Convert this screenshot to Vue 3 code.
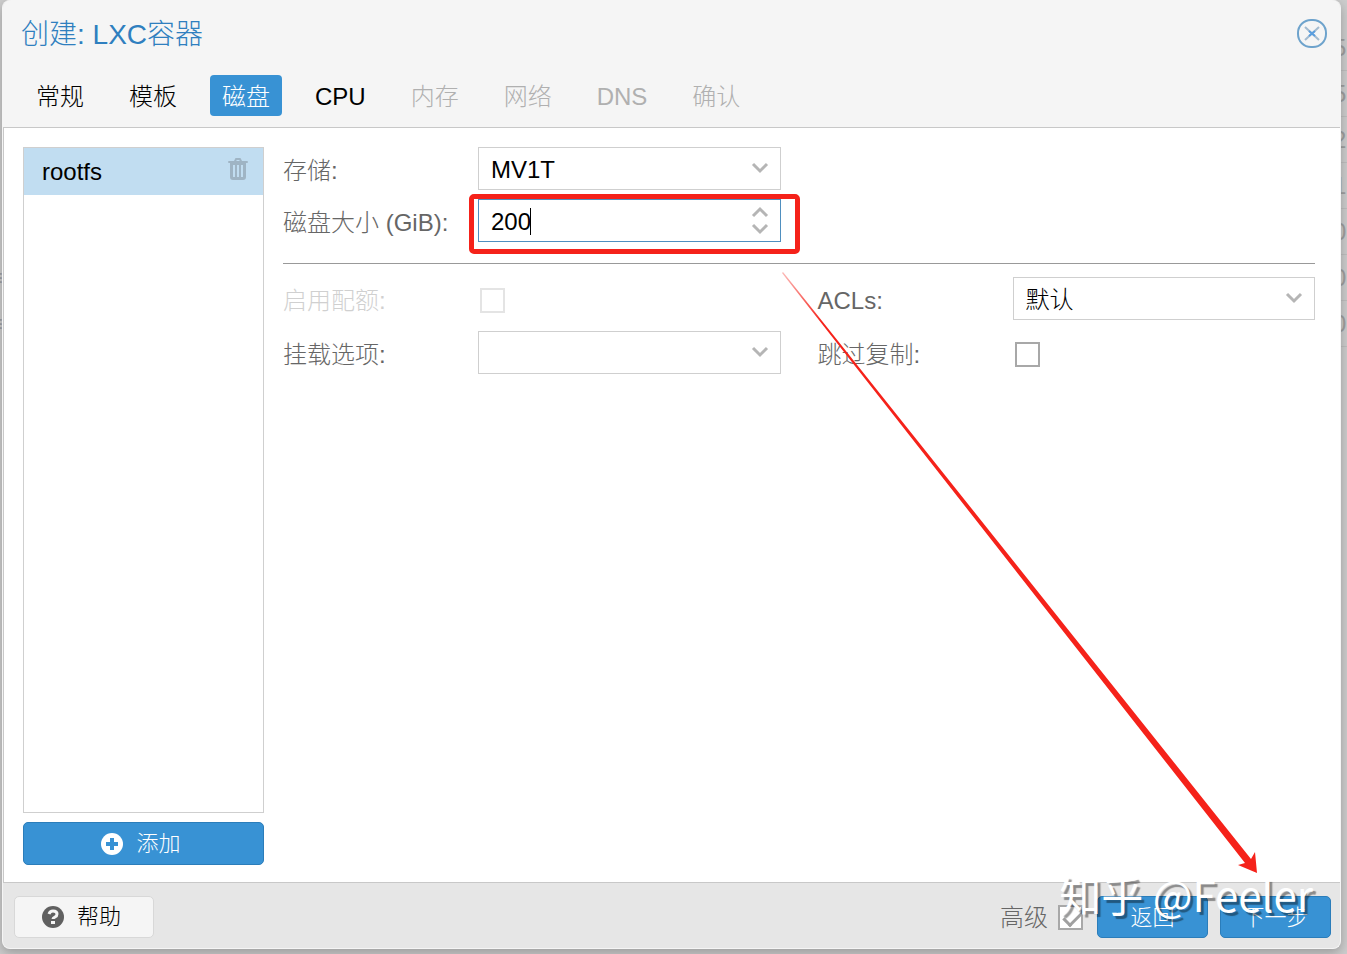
<template>
  <div class="viewport">
    <div class="backdrop backdrop-left" aria-hidden="true">
      <span v-for="(mark, i) in leftMarks" :key="i" class="backdrop-row">{{ mark }}</span>
    </div>
    <div class="backdrop backdrop-right" aria-hidden="true">
      <span v-for="(mark, i) in rightMarks" :key="i" class="backdrop-row">{{ mark }}</span>
    </div>

    <div class="window" role="dialog" aria-labelledby="window-title">
      <header class="window-header">
        <div class="title-row">
          <h1 id="window-title" class="title">创建: LXC容器</h1>
          <button type="button" class="close" aria-label="关闭">
            <svg width="32" height="32" viewBox="0 0 32 32" fill="none">
              <rect x="2" y="2" width="28" height="27" rx="13" stroke="#6ea3cc" stroke-width="2" />
              <path d="M9 9l14 13M23 9L9 22" stroke="#a3bbd0" stroke-width="2" />
              <path d="M13 13l6 5M19 13l-6 5" stroke="#5a9ede" stroke-width="2" />
            </svg>
          </button>
        </div>
        <nav class="tabs">
          <button
            v-for="tab in tabs"
            :key="tab.label"
            type="button"
            class="tab"
            :class="{ active: tab.label === activeTab }"
            :disabled="tab.disabled"
            @click="activeTab = tab.label"
          >
            {{ tab.label }}
          </button>
        </nav>
      </header>

      <main class="window-body">
        <aside class="sidebar">
          <ul class="disk-list">
            <li class="disk-item">
              <span>rootfs</span>
              <button type="button" class="trash" aria-label="删除">
                <svg width="22" height="24" viewBox="0 0 22 24">
                  <path
                    fill="currentColor"
                    fill-rule="evenodd"
                    d="M7 4l1-2q0-1 1-1h4q1 0 1 1l1 2h5q1 0 1 1t-1 1h-1v14q0 3-3 3H6q-3 0-3-3V6H2Q1 6 1 5t1-1zM9 4h4l-1-1H10zM6 8v12h2V8zM10 8v12h2V8zM14 8v12h2V8z"
                  />
                </svg>
              </button>
            </li>
          </ul>
          <button type="button" class="btn btn-primary btn-add">
            <svg width="24" height="24" viewBox="0 0 24 24">
              <circle cx="12" cy="12" r="11" fill="#fff" />
              <path d="M12 6v12M6 12h12" stroke="#3892d4" stroke-width="4" />
            </svg>
            添加
          </button>
        </aside>

        <form class="form" @submit.prevent>
          <div class="form-grid">
            <div class="field">
              <label for="storage">存储:</label>
              <div class="control">
                <select id="storage" v-model="storage">
                  <option>MV1T</option>
                </select>
                <svg class="chevron" width="18" height="12" viewBox="0 0 18 12"><path d="M2 2l7 7 7-7" /></svg>
              </div>
            </div>
            <div class="field field-start">
              <label for="size">磁盘大小 (GiB):</label>
              <div class="control focused">
                <input id="size" v-model="size" type="text" inputmode="numeric" />
                <span class="caret"></span>
                <span class="spinner">
                  <button type="button" aria-label="增加" @click="size++">
                    <svg width="18" height="12" viewBox="0 0 18 12"><path d="M2 10l7-7 7 7" /></svg>
                  </button>
                  <button type="button" aria-label="减少" @click="size--">
                    <svg width="18" height="12" viewBox="0 0 18 12"><path d="M2 2l7 7 7-7" /></svg>
                  </button>
                </span>
                <span class="highlight"></span>
              </div>
            </div>
          </div>

          <hr class="divider" />

          <div class="form-grid advanced">
            <div class="field disabled">
              <label for="quota">启用配额:</label>
              <input id="quota" type="checkbox" disabled />
            </div>
            <div class="field">
              <label for="acls">ACLs:</label>
              <div class="control">
                <select id="acls" v-model="acls">
                  <option>默认</option>
                </select>
                <svg class="chevron" width="18" height="12" viewBox="0 0 18 12"><path d="M2 2l7 7 7-7" /></svg>
              </div>
            </div>
            <div class="field">
              <label for="mount">挂载选项:</label>
              <div class="control">
                <select id="mount">
                  <option></option>
                </select>
                <svg class="chevron" width="18" height="12" viewBox="0 0 18 12"><path d="M2 2l7 7 7-7" /></svg>
              </div>
            </div>
            <div class="field">
              <label for="replication">跳过复制:</label>
              <input id="replication" type="checkbox" />
            </div>
          </div>
        </form>
      </main>

      <footer class="window-footer">
        <button type="button" class="btn btn-help">
          <svg width="24" height="24" viewBox="0 0 24 24" fill="none">
            <circle cx="12" cy="12" r="11" fill="#606060" />
            <path d="M8 9q1-3 4-3 4 0 4 3 0 2-2 3t-2 2" stroke="#f5f5f5" stroke-width="3" />
            <path d="M10 16h4v3h-4z" fill="#f5f5f5" />
          </svg>
          帮助
        </button>
        <div class="footer-actions">
          <label class="advanced-toggle">
            高级
            <input v-model="advanced" type="checkbox" />
          </label>
          <button type="button" class="btn btn-primary">返回</button>
          <button type="button" class="btn btn-primary">下一步</button>
        </div>
      </footer>

      <svg class="arrow" width="480" height="604" viewBox="0 0 480 604" aria-hidden="true">
        <defs>
          <linearGradient id="arrow-fade" gradientUnits="userSpaceOnUse" x1="0" y1="0" x2="40" y2="51">
            <stop offset="0" stop-color="#f5221a" stop-opacity="0.3" />
            <stop offset="1" stop-color="#f5221a" />
          </linearGradient>
        </defs>
        <path fill="url(#arrow-fade)" d="M0 1L1 0L469 587L473 580L475 601L456 593L463 591Z" />
      </svg>
      <div class="watermark">知乎 @Feeler</div>
    </div>
  </div>
</template>

<script setup>
import { ref } from 'vue'

const tabs = [
  { label: '常规' },
  { label: '模板' },
  { label: '磁盘' },
  { label: 'CPU' },
  { label: '内存', disabled: true },
  { label: '网络', disabled: true },
  { label: 'DNS', disabled: true },
  { label: '确认', disabled: true }
]

const activeTab = ref('磁盘')
const storage = ref('MV1T')
const size = ref(200)
const acls = ref('默认')
const advanced = ref(true)

// rows of the grid that peeks out from behind the window
const rightMarks = ['5', '5', '2', '1', '0', '01', '02']
const leftMarks = ['', '', '', '', '', '≡', '≡']
</script>

<style>
body {
  background: #cdcdcd;
}
</style>

<style scoped>
* {
  box-sizing: border-box;
}

.viewport {
  position: relative;
  display: flex;
  min-height: 100vh;
  padding: 0 6px 5px 2px;
  overflow: hidden;
  font-family: 'Liberation Sans', 'Noto Sans CJK SC', sans-serif;
  font-size: 24px;
  font-weight: 300;
  line-height: 36px;
  color: #000;
}

button,
input,
select {
  margin: 0;
  font: inherit;
  color: inherit;
}

.backdrop {
  position: absolute;
  top: 25px;
  width: 14px;
  overflow: hidden;
  color: #a0a0a0;
}

.backdrop-left {
  left: -11px;
}

.backdrop-right {
  right: 0;
}

.backdrop-row {
  display: block;
  height: 46px;
  line-height: 46px;
  white-space: nowrap;
}

.backdrop-right .backdrop-row {
  border-bottom: 1px solid #bfbfbf;
}

.window {
  position: relative;
  display: flex;
  flex: 1;
  flex-direction: column;
  min-width: 0;
  border: 1px solid #f5f5f5;
  border-top: 0;
  border-radius: 8px;
  background: #e6e6e6;
  box-shadow: 0 4px 12px rgba(0, 0, 0, 0.25);
}

.window-header {
  padding: 17px 12px 11px 18px;
  border-bottom: 1px solid #c8c8c8;
  border-radius: 8px 8px 0 0;
  background: #f5f5f5;
}

.title-row {
  display: flex;
  align-items: center;
  justify-content: space-between;
}

.title {
  margin: 0;
  font-size: 28px;
  font-weight: 300;
  color: #2f7fbf;
}

.close {
  display: flex;
  padding: 0 0 2px;
  border: 0;
  background: none;
}

.tabs {
  display: flex;
  gap: 21px;
  margin-top: 22px;
  padding-left: 3px;
}

.tab {
  height: 41px;
  padding: 2px 12px 0;
  border: 0;
  border-radius: 4px;
  background: none;
}

.tab.active {
  background: #3892d4;
  color: #fff;
}

.tab:disabled {
  color: #b0b0b0;
}

.window-body {
  display: flex;
  flex: 1;
  gap: 19px;
  padding: 19px 25px 17px 19px;
  border-left: 1px solid #c8c8c8;
  background: #fff;
}

.sidebar {
  display: flex;
  flex-direction: column;
  flex: none;
  gap: 9px;
  width: 241px;
}

.disk-list {
  flex: 1;
  margin: 0;
  padding: 0;
  border: 1px solid #cfcfcf;
  list-style: none;
}

.disk-item {
  display: flex;
  align-items: center;
  justify-content: space-between;
  height: 47px;
  padding: 0 14px 0 18px;
  background: #c1ddf1;
}

.trash {
  display: flex;
  padding: 0 0 5px;
  border: 0;
  background: none;
  color: #9fb4c4;
}

.btn {
  display: flex;
  align-items: center;
  justify-content: center;
  height: 42px;
  padding: 2px 6px 0;
  border: 1px solid #d8d8d8;
  border-radius: 5px;
  background: #f5f5f5;
  font-size: 22px;
}

.btn-primary {
  width: 111px;
  border-color: #2b7dba;
  background: #3892d4;
  color: #fff;
}

.btn-add {
  gap: 12px;
  width: 100%;
  height: 43px;
  padding: 0 12px 0 6px;
}

.btn-help {
  gap: 12px;
  width: 140px;
  padding: 0 12px 0 6px;
}

.form {
  flex: 1;
  min-width: 0;
}

.form-grid {
  display: grid;
  grid-template-columns: 1fr 1fr;
  gap: 9px 37px;
}

.advanced {
  row-gap: 11px;
}

.field {
  display: flex;
  align-items: center;
  height: 43px;
}

.field-start {
  grid-column: 1;
}

.field label {
  flex: none;
  width: 195px;
  padding-top: 4px;
  color: #666;
}

.field.disabled {
  opacity: 0.3;
}

.control {
  position: relative;
  flex: 1;
  min-width: 0;
}

.control select,
.control input {
  display: block;
  width: 100%;
  height: 43px;
  padding: 2px 12px 0;
  border: 1px solid #cfcfcf;
  border-radius: 0;
  outline: 0;
  background: #fff;
  appearance: none;
}

.control.focused input {
  border-color: #4f8fbf;
  caret-color: transparent;
}

.control svg {
  fill: none;
  stroke: #b5b5b5;
  stroke-width: 3;
}

.chevron {
  position: absolute;
  top: 15px;
  right: 12px;
  pointer-events: none;
}

.caret {
  position: absolute;
  top: 9px;
  left: 52px;
  width: 1px;
  height: 27px;
  background: #000;
}

.spinner {
  position: absolute;
  top: 7px;
  right: 12px;
  display: flex;
  flex-direction: column;
  gap: 5px;
}

.spinner button {
  display: flex;
  padding: 0;
  border: 0;
  background: none;
}

/* red frame drawn round the disk size box */
.highlight {
  position: absolute;
  inset: -5px -19px -12px -9px;
  border: 5px solid #f5221a;
  border-radius: 5px;
  pointer-events: none;
}

input[type='checkbox'] {
  position: relative;
  flex: none;
  width: 25px;
  height: 25px;
  border: 2px solid #a8a8a8;
  background: #fff;
  appearance: none;
}

.field input[type='checkbox'] {
  margin: 3px 0 0 2px;
}

input[type='checkbox']:checked::after {
  content: '';
  position: absolute;
  top: 1px;
  left: 7px;
  width: 8px;
  height: 15px;
  border: solid #a0a0a0;
  border-width: 0 3px 3px 0;
  transform: rotate(45deg);
}

.divider {
  height: 1px;
  margin: 21px 0 13px;
  border: 0;
  background: #999;
}

.window-footer {
  display: flex;
  align-items: center;
  justify-content: space-between;
  height: 66px;
  padding: 2px 9px 0 11px;
  border-top: 1px solid #c8c8c8;
}

.footer-actions {
  display: flex;
  align-items: center;
  gap: 12px;
}

.advanced-toggle {
  display: flex;
  align-items: center;
  gap: 10px;
  padding: 2px 2px 0 0;
  color: #666;
}

.arrow {
  position: absolute;
  top: 272px;
  left: 779px;
  pointer-events: none;
}

.watermark {
  position: absolute;
  right: 27px;
  bottom: 26px;
  font-family: 'Noto Sans CJK SC', sans-serif;
  font-size: 42px;
  font-weight: 400;
  line-height: 56px;
  color: #fff;
  text-shadow: 3px 3px 1px rgba(0, 0, 0, 0.4);
  pointer-events: none;
}
</style>
